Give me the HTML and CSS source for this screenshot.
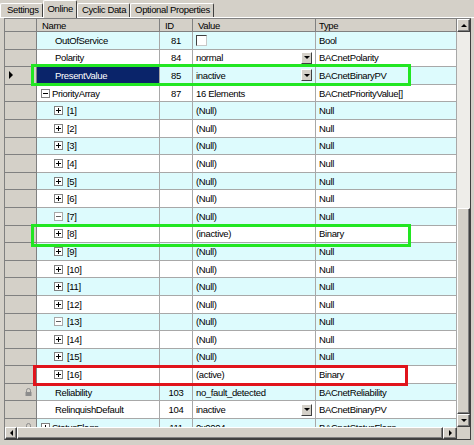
FILE: index.html
```html
<!DOCTYPE html>
<html lang="en">
<head>
    <meta charset="UTF-8">
    <meta name="viewport" content="width=device-width, initial-scale=1.0">
    <title>Online</title>
    <link rel="stylesheet" href="styles.css">
</head>
<body>
    <div class="tabs">
        <div class="tab">Settings</div>
        <div class="tab active">Online</div>
        <div class="tab">Cyclic Data</div>
        <div class="tab">Optional Properties</div>
    </div>
    <div class="panel">
        <div class="grid">
            <div class="sheet">
                <div class="row head">
                    <div class="cell rowhdr"></div>
                    <div class="cell">Name</div>
                    <div class="cell">ID</div>
                    <div class="cell">Value</div>
                    <div class="cell type">Type</div>
                </div>
                <div class="rows">
                    <div class="row">
                        <div class="cell rowhdr"></div>
                        <div class="cell name">OutOfService</div>
                        <div class="cell id">81</div>
                        <div class="cell"><span class="check"></span></div>
                        <div class="cell">Bool</div>
                    </div>
                    <div class="row">
                        <div class="cell rowhdr"></div>
                        <div class="cell name">Polarity</div>
                        <div class="cell id">84</div>
                        <div class="cell">normal<span class="drop"></span></div>
                        <div class="cell">BACnetPolarity</div>
                    </div>
                    <div class="row mark">
                        <div class="cell rowhdr"><span class="pointer"></span></div>
                        <div class="cell name sel">PresentValue</div>
                        <div class="cell id">85</div>
                        <div class="cell">inactive<span class="drop"></span></div>
                        <div class="cell">BACnetBinaryPV</div>
                    </div>
                    <div class="row">
                        <div class="cell rowhdr"></div>
                        <div class="cell name group"><span class="exp"></span>PriorityArray</div>
                        <div class="cell id">87</div>
                        <div class="cell">16 Elements</div>
                        <div class="cell">BACnetPriorityValue[]</div>
                    </div>
                    <div class="row">
                        <div class="cell rowhdr"></div>
                        <div class="cell name item"><span class="exp plus"></span>[1]</div>
                        <div class="cell id"></div>
                        <div class="cell">(Null)</div>
                        <div class="cell">Null</div>
                    </div>
                    <div class="row">
                        <div class="cell rowhdr"></div>
                        <div class="cell name item"><span class="exp plus"></span>[2]</div>
                        <div class="cell id"></div>
                        <div class="cell">(Null)</div>
                        <div class="cell">Null</div>
                    </div>
                    <div class="row">
                        <div class="cell rowhdr"></div>
                        <div class="cell name item"><span class="exp plus"></span>[3]</div>
                        <div class="cell id"></div>
                        <div class="cell">(Null)</div>
                        <div class="cell">Null</div>
                    </div>
                    <div class="row">
                        <div class="cell rowhdr"></div>
                        <div class="cell name item"><span class="exp plus"></span>[4]</div>
                        <div class="cell id"></div>
                        <div class="cell">(Null)</div>
                        <div class="cell">Null</div>
                    </div>
                    <div class="row">
                        <div class="cell rowhdr"></div>
                        <div class="cell name item"><span class="exp plus"></span>[5]</div>
                        <div class="cell id"></div>
                        <div class="cell">(Null)</div>
                        <div class="cell">Null</div>
                    </div>
                    <div class="row">
                        <div class="cell rowhdr"></div>
                        <div class="cell name item"><span class="exp plus"></span>[6]</div>
                        <div class="cell id"></div>
                        <div class="cell">(Null)</div>
                        <div class="cell">Null</div>
                    </div>
                    <div class="row">
                        <div class="cell rowhdr"></div>
                        <div class="cell name item"><span class="exp faint"></span>[7]</div>
                        <div class="cell id"></div>
                        <div class="cell">(Null)</div>
                        <div class="cell">Null</div>
                    </div>
                    <div class="row mark low">
                        <div class="cell rowhdr"></div>
                        <div class="cell name item"><span class="exp plus"></span>[8]</div>
                        <div class="cell id"></div>
                        <div class="cell">(inactive)</div>
                        <div class="cell">Binary</div>
                    </div>
                    <div class="row">
                        <div class="cell rowhdr"></div>
                        <div class="cell name item"><span class="exp plus"></span>[9]</div>
                        <div class="cell id"></div>
                        <div class="cell">(Null)</div>
                        <div class="cell">Null</div>
                    </div>
                    <div class="row">
                        <div class="cell rowhdr"></div>
                        <div class="cell name item"><span class="exp plus"></span>[10]</div>
                        <div class="cell id"></div>
                        <div class="cell">(Null)</div>
                        <div class="cell">Null</div>
                    </div>
                    <div class="row">
                        <div class="cell rowhdr"></div>
                        <div class="cell name item"><span class="exp plus"></span>[11]</div>
                        <div class="cell id"></div>
                        <div class="cell">(Null)</div>
                        <div class="cell">Null</div>
                    </div>
                    <div class="row">
                        <div class="cell rowhdr"></div>
                        <div class="cell name item"><span class="exp plus"></span>[12]</div>
                        <div class="cell id"></div>
                        <div class="cell">(Null)</div>
                        <div class="cell">Null</div>
                    </div>
                    <div class="row">
                        <div class="cell rowhdr"></div>
                        <div class="cell name item"><span class="exp faint"></span>[13]</div>
                        <div class="cell id"></div>
                        <div class="cell">(Null)</div>
                        <div class="cell">Null</div>
                    </div>
                    <div class="row">
                        <div class="cell rowhdr"></div>
                        <div class="cell name item"><span class="exp plus"></span>[14]</div>
                        <div class="cell id"></div>
                        <div class="cell">(Null)</div>
                        <div class="cell">Null</div>
                    </div>
                    <div class="row">
                        <div class="cell rowhdr"></div>
                        <div class="cell name item"><span class="exp plus"></span>[15]</div>
                        <div class="cell id"></div>
                        <div class="cell">(Null)</div>
                        <div class="cell">Null</div>
                    </div>
                    <div class="row mark red">
                        <div class="cell rowhdr"></div>
                        <div class="cell name item"><span class="exp plus"></span>[16]</div>
                        <div class="cell id"></div>
                        <div class="cell">(active)</div>
                        <div class="cell">Binary</div>
                    </div>
                    <div class="row">
                        <div class="cell rowhdr">
                            <svg class="lock" width="7" height="8" viewBox="0 0 7 8"><path d="M1.5 4V2.5a2 2 0 0 1 4 0V4" fill="none" stroke="#8c8c8c"/><rect x="0.5" y="4" width="6" height="4" fill="#8c8c8c"/></svg>
                        </div>
                        <div class="cell name">Reliability</div>
                        <div class="cell id">103</div>
                        <div class="cell">no_fault_detected</div>
                        <div class="cell">BACnetReliability</div>
                    </div>
                    <div class="row">
                        <div class="cell rowhdr"></div>
                        <div class="cell name">RelinquishDefault</div>
                        <div class="cell id">104</div>
                        <div class="cell">inactive<span class="drop"></span></div>
                        <div class="cell">BACnetBinaryPV</div>
                    </div>
                    <div class="row">
                        <div class="cell rowhdr">
                            <svg class="lock" width="7" height="8" viewBox="0 0 7 8"><path d="M1.5 4V2.5a2 2 0 0 1 4 0V4" fill="none" stroke="#8c8c8c"/><rect x="0.5" y="4" width="6" height="4" fill="#8c8c8c"/></svg>
                        </div>
                        <div class="cell name group"><span class="exp plus"></span>StatusFlags</div>
                        <div class="cell id">111</div>
                        <div class="cell">0x0004</div>
                        <div class="cell">BACnetStatusFlags</div>
                    </div>
                </div>
            </div>
            <div class="vscroll">
                <div class="sbtn up"></div>
                <div class="track"></div>
                <div class="thumb"></div>
                <div class="sbtn down"></div>
            </div>
            <div class="hscroll">
                <div class="sbtn left"></div>
                <div class="thumb"></div>
                <div class="sbtn right"></div>
            </div>
            <div class="corner"></div>
        </div>
    </div>
</body>
</html>
```

FILE: styles.css
```css
*,
*::before,
*::after {
    box-sizing: border-box;
}

body {
    margin: 0;
    background-color: #d4d0c8;
    font-family: "Liberation Sans", Arial, sans-serif;
    font-size: 9.5px;
    letter-spacing: -0.35px;
    color: #000;
    overflow: hidden;
}

/* tab strip */
.tabs {
    display: flex;
    align-items: flex-end;
    height: 17px;
}

.tab {
    height: 14px;
    line-height: 12px;
    padding: 0 3px 0 4px;
    border-top: 1px solid #fff;
    border-left: 1px solid #fff;
    border-right: 1px solid #404040;
    border-radius: 2px 2px 0 0;
    white-space: nowrap;
}

.tab:first-child {
    padding-left: 6px;
}

.tab.active {
    position: relative;
    z-index: 1;
    height: 18px;
    line-height: 15px;
    margin-bottom: -1px;
    background-color: #d4d0c8;
}

.panel {
    border-top: 1px solid #fff;
    padding-left: 4px;
}

/* property grid */
.grid {
    display: grid;
    grid-template-columns: 452px 13px;
    grid-template-rows: 408px 12px;
    width: 467px;
    border: 1px solid;
    border-color: #808080 #404040 #404040 #808080;
}

.sheet {
    overflow: hidden;
    background-color: #fff;
}

.row {
    display: grid;
    grid-template-columns: 32px 123px 33px 123px 141px;
    height: 17.6px;
    position: relative;
}

.rows .row:nth-child(odd) {
    background-color: #ddfbfd;
}

.row.head {
    height: 13px;
    background-color: #d4d0c8;
}

.cell {
    display: flex;
    align-items: center;
    padding-left: 3px;
    border-right: 1px solid #a8a8a8;
    border-bottom: 1px solid #a8a8a8;
    white-space: nowrap;
    overflow: hidden;
}

.head .cell {
    padding-left: 5px;
    border-color: #808080;
}

.head .cell.type {
    padding-left: 3px;
}

.rowhdr {
    padding-left: 4px;
    background-color: #d4d0c8;
    border-color: #808080;
}

.name {
    padding-left: 18px;
}

.name.group {
    padding-left: 4px;
    gap: 2px;
}

.name.item {
    padding-left: 17px;
    gap: 4px;
}

.name.sel {
    background-color: #0a246a;
    color: #fff;
}

.id {
    justify-content: center;
    padding-left: 0;
}

.exp {
    position: relative;
    flex: none;
    width: 9px;
    height: 9px;
    border: 1px solid #808080;
    background-color: #fff;
}

.exp::before {
    content: "";
    position: absolute;
    left: 1px;
    top: 3px;
    width: 5px;
    height: 1px;
    background-color: #000;
}

.exp.plus::after {
    content: "";
    position: absolute;
    left: 3px;
    top: 1px;
    width: 1px;
    height: 5px;
    background-color: #000;
}

.exp.faint {
    border-color: #a8a8a8;
}

.exp.faint::before {
    background-color: #606060;
}

.pointer {
    width: 0;
    height: 0;
    border-left: 4px solid #000;
    border-top: 4px solid transparent;
    border-bottom: 4px solid transparent;
}

.lock {
    margin-left: 16px;
}

.check {
    width: 11px;
    height: 11px;
    border: 1px solid;
    border-color: #404040 #c8c8c8 #c8c8c8 #404040;
    background-color: #fff;
}

.drop {
    display: flex;
    align-items: center;
    justify-content: center;
    width: 11px;
    height: 12px;
    margin-left: auto;
    margin-right: 3px;
    background-color: #d4d0c8;
    border: 1px solid;
    border-color: #fff #404040 #404040 #fff;
}

.drop::before {
    content: "";
    border-top: 3px solid #000;
    border-left: 3px solid transparent;
    border-right: 3px solid transparent;
}

/* highlight frames drawn over the rows */
.mark {
    z-index: 1;
}

.mark::after {
    content: "";
    position: absolute;
    left: 26px;
    top: -3px;
    width: 380px;
    height: 22px;
    border: 3px solid #22e622;
}

.mark.low::after {
    top: -2px;
    height: 23px;
}

.mark.red::after {
    left: 28px;
    top: -1px;
    width: 375px;
    height: 21px;
    border-color: #e0141c;
}

/* scrollbars */
.vscroll {
    display: flex;
    flex-direction: column;
    background-color: #eeede9;
}

.hscroll {
    display: flex;
    background-color: #eeede9;
}

.track {
    flex: 1;
}

.sbtn,
.thumb {
    flex: none;
    display: flex;
    align-items: center;
    justify-content: center;
    background-color: #d4d0c8;
    border: 1px solid;
    border-color: #fff #404040 #404040 #fff;
    box-shadow: inset -1px -1px #808080;
}

.vscroll .sbtn {
    height: 13px;
}

.vscroll .thumb {
    height: 206px;
}

.hscroll .thumb {
    flex: 1;
}

.sbtn.left {
    width: 12px;
}

.sbtn.right {
    width: 14px;
}

.sbtn::before {
    content: "";
    border: 3px solid transparent;
}

.sbtn.up::before {
    border-top: 0;
    border-bottom-color: #000;
}

.sbtn.down::before {
    border-bottom: 0;
    border-top-color: #000;
}

.sbtn.left::before {
    border-left: 0;
    border-right-color: #000;
}

.sbtn.right::before {
    border-right: 0;
    border-left-color: #000;
}

.corner {
    background-color: #d4d0c8;
}
```
